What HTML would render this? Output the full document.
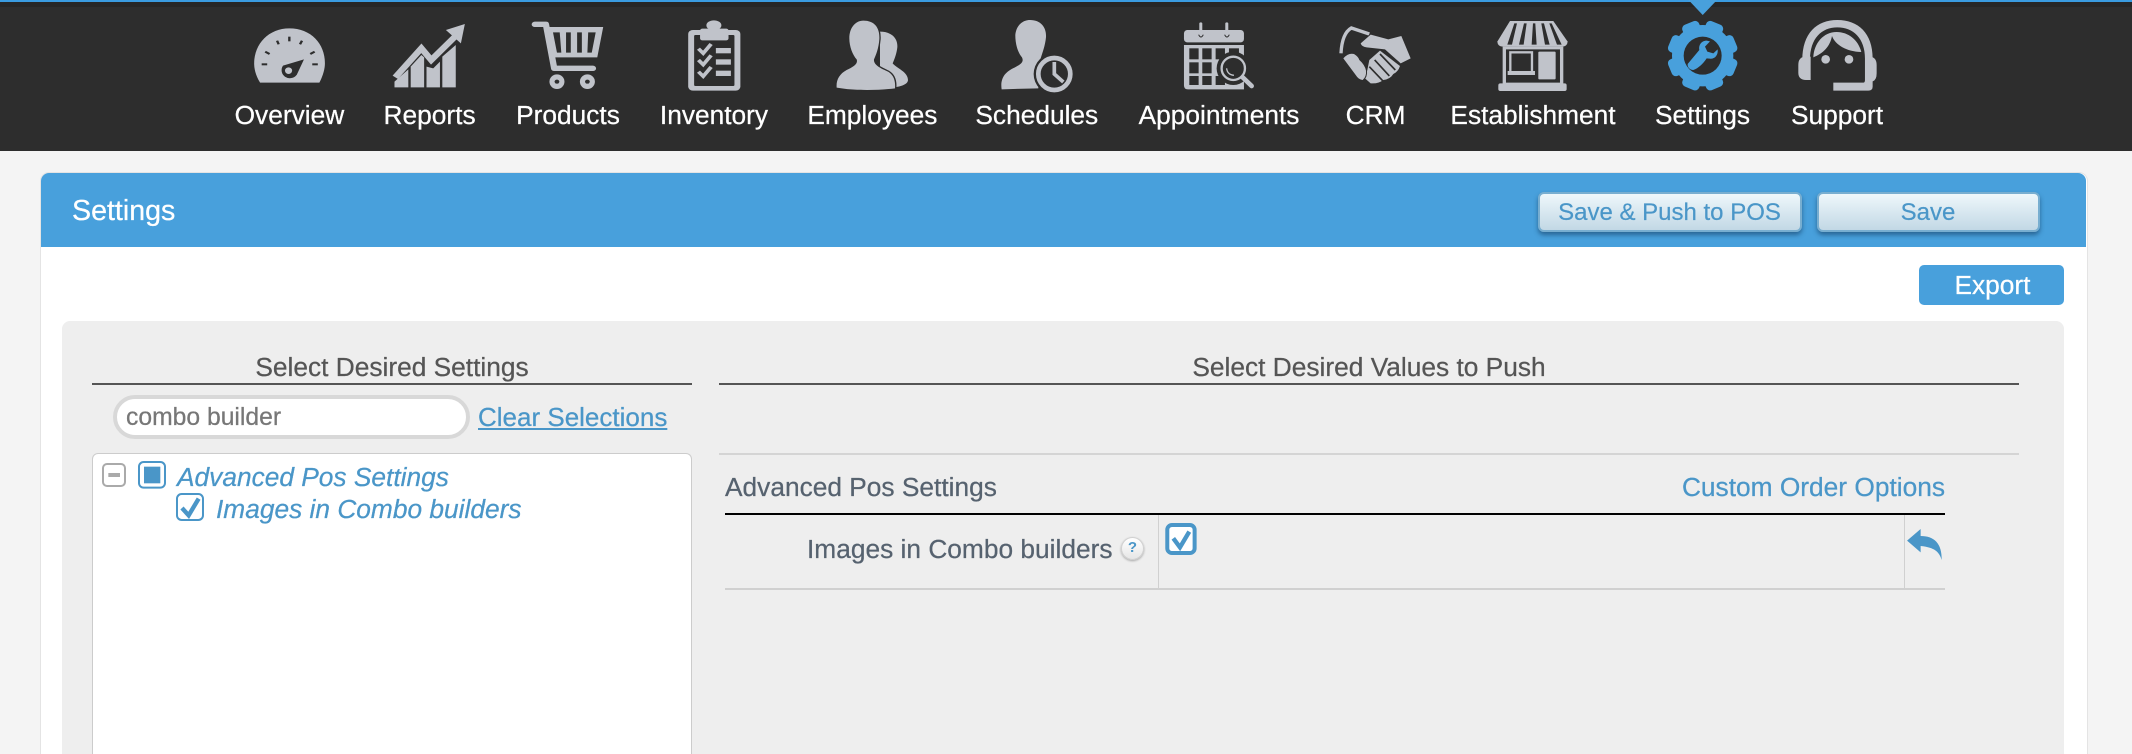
<!DOCTYPE html>
<html><head><meta charset="utf-8"><title>Settings</title>
<style>
html,body{margin:0;padding:0;width:2132px;height:754px;overflow:hidden;background:#f4f4f4;font-family:"Liberation Sans",Arial,sans-serif}
#p{position:relative;width:2132px;height:754px;overflow:hidden}
.a{position:absolute}
.t{position:absolute;font-size:26.3px;line-height:30px;white-space:nowrap;-webkit-text-stroke:.25px}
.n{color:#fff;top:100px;transform:translateX(-50%)}
.c{transform:translateX(-50%)}
.btn{position:absolute;top:192px;height:40px;box-sizing:border-box;border:2px solid #78aed0;border-radius:6px;background:linear-gradient(#eef7fb,#c2d8e5);box-shadow:0 3px 5px rgba(25,70,110,.65);color:#4a96c8;font-size:24px;line-height:38px;text-align:center;-webkit-text-stroke:.2px}
svg{position:absolute;left:0;top:0}
</style></head><body><div id="p">
<div class="a" style="left:0;top:0;width:2132px;height:151px;background:#2d2d2d"></div>
<div class="a" style="left:0;top:0;width:2132px;height:7px;background:#262626"></div>
<div class="a" style="left:0;top:0;width:2132px;height:1.5px;background:#3a9be0"></div>

<div class="t n" style="left:289.4px">Overview</div>
<div class="t n" style="left:429.6px">Reports</div>
<div class="t n" style="left:568px">Products</div>
<div class="t n" style="left:714px">Inventory</div>
<div class="t n" style="left:872.4px">Employees</div>
<div class="t n" style="left:1036.8px">Schedules</div>
<div class="t n" style="left:1219px">Appointments</div>
<div class="t n" style="left:1375.6px">CRM</div>
<div class="t n" style="left:1533px">Establishment</div>
<div class="t n" style="left:1702.5px">Settings</div>
<div class="t n" style="left:1837px">Support</div>

<div class="a" style="left:39.5px;top:171.5px;width:2048px;height:582.5px;box-sizing:border-box;border:1.5px solid #e4e4e4;border-bottom:0;border-radius:9px 9px 0 0;background:#fff"></div>
<div class="a" style="left:41px;top:173px;width:2045px;height:74px;background:#48a0dc;border-radius:8px 8px 0 0"></div>
<div class="t" style="left:72px;top:195px;font-size:28.6px;line-height:32px;color:#fff">Settings</div>
<div class="btn" style="left:1537.5px;width:264px">Save &amp; Push to POS</div>
<div class="btn" style="left:1816.5px;width:223px">Save</div>
<div class="a" style="left:1919px;top:265px;width:145px;height:40px;background:#48a0dc;border-radius:5px;color:#fff;font-size:26.3px;line-height:40px;text-align:center;text-indent:2px;-webkit-text-stroke:.25px">Export</div>

<div class="a" style="left:62px;top:321px;width:2002px;height:433px;background:#eee;border-radius:8px 8px 0 0"></div>

<div class="t c" style="left:392px;top:352px;color:#555">Select Desired Settings</div>
<div class="a" style="left:92px;top:383px;width:600px;height:1.5px;background:#555"></div>
<div class="t c" style="left:1369px;top:352px;color:#555">Select Desired Values to Push</div>
<div class="a" style="left:719px;top:383px;width:1300px;height:1.5px;background:#555"></div>

<div class="a" style="left:112.5px;top:395px;width:357px;height:44px;box-sizing:border-box;border:4px solid #d8d8d8;border-radius:22px;background:#fff"></div>
<div class="t" style="left:126px;top:403px;font-size:24.7px;color:#777">combo builder</div>
<div class="t" style="left:478px;top:402px;font-size:26px;color:#4a96c8;text-decoration:underline">Clear Selections</div>

<div class="a" style="left:92px;top:453px;width:600px;height:301px;box-sizing:border-box;border:1.5px solid #ccc;border-bottom:0;border-radius:6px 6px 0 0;background:#fff"></div>
<div class="t" style="left:177px;top:462px;font-style:italic;color:#4a96c8">Advanced Pos Settings</div>
<div class="t" style="left:216px;top:494px;font-style:italic;color:#4a96c8">Images in Combo builders</div>

<div class="a" style="left:719px;top:453px;width:1300px;height:2px;background:#d4d4d4"></div>
<div class="t" style="left:725px;top:472px;color:#56626f">Advanced Pos Settings</div>
<div class="t" style="right:187px;top:472px;color:#4a96c8">Custom Order Options</div>
<div class="a" style="left:725px;top:513px;width:1220px;height:2px;background:#000"></div>
<div class="a" style="left:725px;top:588px;width:1220px;height:2px;background:#d0d0d0"></div>
<div class="a" style="left:1157.5px;top:515px;width:1.5px;height:73px;background:#d0d0d0"></div>
<div class="a" style="left:1903.5px;top:515px;width:1.5px;height:73px;background:#d0d0d0"></div>
<div class="t" style="left:807px;top:534px;color:#56626f">Images in Combo builders</div>
<div class="a" style="left:1121px;top:537px;width:23px;height:23px;box-sizing:border-box;border:1.5px solid #d0d0d0;border-radius:50%;background:linear-gradient(#fff,#e6e6e6);box-shadow:0 1px 2px rgba(0,0,0,.3);color:#4a96c8;font-size:15px;font-weight:bold;line-height:20px;text-align:center">?</div>

<svg width="2132" height="754" viewBox="0 0 2132 754" xmlns="http://www.w3.org/2000/svg">
<polygon points="1688.5,0 1717,0 1702.7,15" fill="#48a0dc"/>

<!-- zoom-1 icons -->
<g transform="translate(200,0) scale(.3953,.3333)" fill="#c0c3ca">
  <path d="M152 248C140 225 137 205 137 190C137 130 175 85 226 85C280 85 316 130 316 190C316 205 312 225 302 248Z"/>
  <g stroke="#2d2d2d" stroke-width="6">
    <line x1="226" y1="110" x2="226" y2="124"/><line x1="195" y1="122" x2="199" y2="133"/><line x1="258" y1="122" x2="253" y2="133"/>
    <line x1="165" y1="155" x2="176" y2="162"/><line x1="290" y1="155" x2="279" y2="162"/><line x1="156" y1="193" x2="170" y2="193"/><line x1="284" y1="193" x2="298" y2="193"/>
  </g>
  <path d="M263 178L245 224A21 24 0 1 1 210 197Z" fill="#2d2d2d"/>
  <ellipse cx="224" cy="212" rx="9" ry="10"/>

  <polyline points="494,232 560,145 585,180 645,110" fill="none" stroke="#c0c3ca" stroke-width="17"/>
  <polygon points="622,90 670,72 660,130"/>
  <polygon points="492,262 492,245 527,208 527,262"/>
  <polygon points="533,262 533,200 560,165 567,172 567,262"/>
  <polygon points="573,262 573,200 590,205 607,185 607,262"/>
  <polygon points="613,262 613,170 647,135 647,262"/>

  <path d="M847 73H875L896 205H994" fill="none" stroke="#c0c3ca" stroke-width="16" stroke-linecap="round" stroke-linejoin="round"/>
  <path d="M870 81H1020L1005 172H885ZM893 97L903 158H914L910 97ZM926 97V158H938V97ZM954 97V158H966V97ZM982 97L980 158H991L1001 97Z" fill-rule="evenodd"/>
  <ellipse cx="903" cy="245" rx="19" ry="22"/><ellipse cx="903" cy="245" rx="6" ry="6" fill="#2d2d2d"/>
  <ellipse cx="980" cy="245" rx="19" ry="22"/><ellipse cx="980" cy="245" rx="6" ry="6" fill="#2d2d2d"/>

  <rect x="1235" y="90" width="132" height="182" rx="12"/>
  <rect x="1250" y="105" width="102" height="153" rx="3" fill="#2d2d2d"/>
  <rect x="1265" y="86" width="72" height="35" rx="6"/>
  <ellipse cx="1300" cy="76" rx="19" ry="15"/>
  <g fill="none" stroke="#c0c3ca" stroke-width="10">
    <polyline points="1261,146 1273,160 1293,132"/><polyline points="1261,180 1273,194 1293,166"/><polyline points="1261,215 1273,229 1293,201"/>
  </g>
  <rect x="1305" y="144" width="38" height="16"/><rect x="1305" y="178" width="38" height="16"/><rect x="1305" y="212" width="38" height="16"/>
</g>

<!-- zoom-2 icons -->
<g transform="translate(800,0) scale(.3333)" fill="#c0c3ca">
  <path d="M240 95C275 95 294 115 292 142C290 160 284 176 278 190C290 205 324 215 324 240C324 252 305 260 280 262L240 200Z"/>
  <path d="M190 62C225 62 240 85 238 118C236 145 228 165 222 178C220 195 242 205 264 215C282 225 287 245 285 265C230 272 160 272 110 263C108 240 118 222 140 210C160 200 175 192 170 178C158 165 148 140 148 115C148 85 165 62 190 62Z" stroke="#2d2d2d" stroke-width="8" paint-order="stroke"/>

  <path d="M690 60C725 60 740 85 738 112C736 135 727 160 722 175L715 190L715 265L605 268C600 235 615 215 645 202C665 192 672 185 666 172C652 155 646 130 646 105C648 80 665 60 690 60Z"/>
  <circle cx="763" cy="222" r="62" fill="#2d2d2d"/>
  <circle cx="763" cy="222" r="48" fill="none" stroke="#c0c3ca" stroke-width="14"/>
  <polyline points="763,186 763,222 790,246" fill="none" stroke="#c0c3ca" stroke-width="11"/>

  <rect x="1152" y="90" width="180" height="37" rx="10"/>
  <path d="M1152 135H1332V268H1164Q1152 268 1152 256Z"/>
  <g fill="none" stroke="#2d2d2d" stroke-width="3"><path d="M1196 104Q1203 118 1210 104"/><path d="M1274 104Q1281 118 1288 104"/></g>
  <rect x="1198" y="67" width="9" height="32" rx="4"/><rect x="1276" y="67" width="9" height="32" rx="4"/>
  <g fill="#2d2d2d">
    <rect x="1168" y="145" width="28" height="33"/><rect x="1207" y="145" width="28" height="33"/><rect x="1247" y="145" width="28" height="33"/><rect x="1287" y="145" width="30" height="15"/>
    <rect x="1168" y="187" width="28" height="33"/><rect x="1207" y="187" width="28" height="33"/>
    <rect x="1168" y="228" width="28" height="27"/><rect x="1207" y="228" width="28" height="27"/><rect x="1247" y="228" width="28" height="27"/>
    <circle cx="1300" cy="205" r="50"/>
  </g>
  <circle cx="1300" cy="205" r="35" fill="none" stroke="#c0c3ca" stroke-width="7"/>
  <path d="M1280 205Q1282 224 1302 226" fill="none" stroke="#c0c3ca" stroke-width="4"/>
  <line x1="1328" y1="232" x2="1355" y2="258" stroke="#c0c3ca" stroke-width="14" stroke-linecap="round"/>
</g>

<!-- zoom-11 icons -->
<g transform="translate(1330,10) scale(.3333)" fill="#c0c3ca">
  <path d="M118 72L64 54Q36 70 33 130" fill="none" stroke="#c0c3ca" stroke-width="10"/>
  <path d="M118 150L150 122L210 168Q205 185 190 192Q180 208 160 210Q145 222 122 220L105 205L112 180Z"/>
  <g stroke="#2d2d2d" stroke-width="5"><line x1="150" y1="132" x2="196" y2="180"/><line x1="134" y1="150" x2="178" y2="198"/><line x1="118" y1="170" x2="158" y2="212"/></g>
  <path d="M92 100L122 74L175 88L214 78L242 145L212 160L165 118L110 112Q95 110 92 100Z" stroke="#2d2d2d" stroke-width="6" paint-order="stroke"/>
  <path d="M40 145Q55 128 72 132Q85 140 88 150Q105 165 108 182Q110 200 98 210Q85 208 78 196Z" stroke="#2d2d2d" stroke-width="6" paint-order="stroke"/>

  <path d="M540 33H670L713 95Q712 110 695 110H520Q503 110 502 95Z"/>
  <g fill="#2d2d2d"><polygon points="553,40 561,40 546,104 532,104"/><polygon points="582,40 590,40 581,104 567,104"/><polygon points="609,40 616,40 620,104 605,104"/><polygon points="634,40 642,40 659,104 645,104"/><polygon points="658,40 665,40 695,104 681,104"/></g>
  <path d="M518 110H700V225H518ZM528 118V218H690V118Z" fill-rule="evenodd"/>
  <rect x="541" y="127" width="65" height="62" fill="none" stroke="#c0c3ca" stroke-width="7"/>
  <rect x="533" y="183" width="82" height="12"/>
  <rect x="625" y="125" width="52" height="83" rx="3"/>
  <rect x="505" y="220" width="205" height="23" rx="6"/>
</g>

<!-- zoom-12 icons -->
<g transform="translate(1650,0) scale(.3333)">
  <g fill="#48a0dc">
    <circle cx="158" cy="167" r="92"/>
    <g>
      <rect x="131" y="61" width="54" height="40" rx="13" transform="rotate(22.5 158 167)"/>
      <rect x="131" y="61" width="54" height="40" rx="13" transform="rotate(67.5 158 167)"/>
      <rect x="131" y="61" width="54" height="40" rx="13" transform="rotate(112.5 158 167)"/>
      <rect x="131" y="61" width="54" height="40" rx="13" transform="rotate(157.5 158 167)"/>
      <rect x="131" y="61" width="54" height="40" rx="13" transform="rotate(202.5 158 167)"/>
      <rect x="131" y="61" width="54" height="40" rx="13" transform="rotate(247.5 158 167)"/>
      <rect x="131" y="61" width="54" height="40" rx="13" transform="rotate(292.5 158 167)"/>
      <rect x="131" y="61" width="54" height="40" rx="13" transform="rotate(337.5 158 167)"/>
    </g>
  </g>
  <circle cx="158" cy="167" r="57" fill="#2d2d2d"/>
  <path d="M113 192L148 150C145 135 155 122 170 122L180 124L165 140L172 155L190 160L203 148C205 165 195 178 178 176L170 175C160 190 145 205 130 210C120 210 112 202 113 192Z" fill="#48a0dc"/>

  <g fill="#c0c3ca">
    <path d="M457 180C457 100 500 60 562 60C625 60 668 100 668 175V240H645V175C645 115 610 82 562 82C515 82 480 115 480 180Z"/>
    <path d="M482 170H468Q445 170 445 195V218Q445 240 468 240H482Z"/>
    <path d="M645 170H660Q680 172 680 195V220Q680 240 668 244V260Q668 272 655 272H550V248H640Q645 248 645 240Z"/>
    <path d="M490 172C520 160 540 140 546 108C556 135 590 155 634 156C625 120 595 96 560 96C520 96 492 130 490 172Z"/>
    <circle cx="527" cy="178" r="13"/><circle cx="597" cy="178" r="13"/>
  </g>
</g>

<!-- tree icons -->
<g transform="translate(80,440) scale(.3333)">
  <rect x="69" y="72" width="66" height="66" rx="12" fill="#fff" stroke="#aaa" stroke-width="6"/>
  <rect x="85" y="99" width="35" height="12" fill="#aaa"/>
  <rect x="177" y="66" width="78" height="77" rx="14" fill="#fff" stroke="#4a96c8" stroke-width="6"/>
  <rect x="192" y="80" width="49" height="50" fill="#4a96c8"/>
  <rect x="291" y="162" width="78" height="78" rx="14" fill="#fff" stroke="#4a96c8" stroke-width="6"/>
  <polyline points="306,204 326,226 356,176" fill="none" stroke="#4a96c8" stroke-width="13"/>
</g>

<!-- value checkbox -->
<g transform="translate(710,440) scale(.3333)">
  <rect x="1372" y="255" width="82" height="84" rx="14" fill="#fff" stroke="#4a96c8" stroke-width="12"/>
  <polyline points="1390,295 1410,322 1438,275" fill="none" stroke="#4a96c8" stroke-width="13"/>
</g>

<!-- undo -->
<g transform="translate(1600,440) scale(.3393,.3333)">
  <path d="M905 302L945 267V288C985 288 1008 310 1007 360C1000 335 985 322 945 318V337Z" fill="#4a96c8"/>
</g>
</svg>
</div></body></html>
